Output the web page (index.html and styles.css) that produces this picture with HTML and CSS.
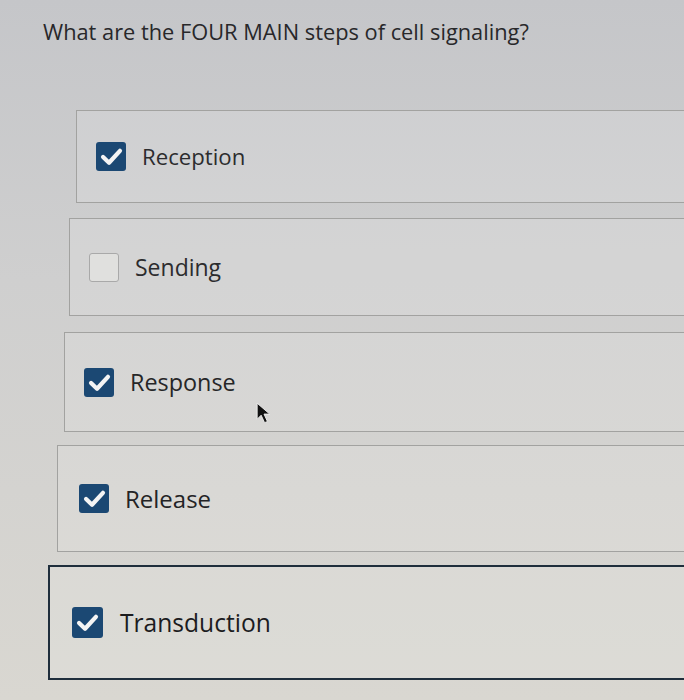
FILE: index.html
```html
<!DOCTYPE html>
<html lang="en">
  <head>
    <meta charset="UTF-8" />
    <meta name="viewport" content="width=device-width, initial-scale=1.0" />
    <title>Cell Signaling</title>
    <link rel="stylesheet" href="styles.css">
  </head>
  <body>
    <div class="question">
      <p class="question__text">What are the FOUR MAIN steps of cell signaling?</p>

      <div class="answers">
        <label class="answer">
          <span class="check check--on">
            <svg viewBox="0 0 24 24"><path d="M4.5 12.5L9.8 17.5L19.5 7" /></svg>
          </span>
          <span class="answer__label">Reception</span>
        </label>

        <label class="answer">
          <span class="check"></span>
          <span class="answer__label">Sending</span>
        </label>

        <label class="answer">
          <span class="check check--on">
            <svg viewBox="0 0 24 24"><path d="M4.5 12.5L9.8 17.5L19.5 7" /></svg>
          </span>
          <span class="answer__label">Response</span>
          <svg class="pointer" viewBox="0 0 14 20">
            <path d="M1 1L1 15L4.5 11.5L7.5 18L10 17L7 10.5L12 10.5Z" />
          </svg>
        </label>

        <label class="answer">
          <span class="check check--on">
            <svg viewBox="0 0 24 24"><path d="M4.5 12.5L9.8 17.5L19.5 7" /></svg>
          </span>
          <span class="answer__label">Release</span>
        </label>

        <label class="answer answer--focus">
          <span class="check check--on">
            <svg viewBox="0 0 24 24"><path d="M4.5 12.5L9.8 17.5L19.5 7" /></svg>
          </span>
          <span class="answer__label">Transduction</span>
        </label>
      </div>
    </div>
  </body>
</html>
```

FILE: styles.css
```css
html,
body {
  margin: 0;
  height: 100%;
}

body {
  overflow: hidden;
  font-family: "Open Sans", "Liberation Sans", sans-serif;
  color: #2e2e2f;
  background: linear-gradient(180deg, #c5c6c9 0%, #cfcfcf 40%, #d9d7d1 100%);
}

.question {
  padding: 18px 0 0 43px;
}

.question__text {
  margin: 0;
  font-size: 21.8px;
  line-height: 28px;
  color: #28282a;
}

.answers {
  display: flex;
  flex-direction: column;
  margin-top: 64px;
  margin-left: 33px;
}

.answer {
  position: relative;
  display: flex;
  align-items: center;
  gap: 16px;
  height: 91px;
  padding-left: 19px;
  border: 1.5px solid #a2a2a0;
  border-right: none;
  background: rgba(255, 255, 255, 0.12);
  cursor: pointer;
}

/* each row sits a little further left and grows a little */
.answer:nth-child(2) {
  margin-top: 15px;
  margin-left: -7px;
  height: 96px;
}

.answer:nth-child(3) {
  margin-top: 16px;
  margin-left: -12px;
  height: 98px;
}

.answer:nth-child(4) {
  margin-top: 13px;
  margin-left: -19px;
  height: 105px;
  padding-left: 21px;
}

.answer--focus {
  margin-top: 13px;
  margin-left: -28px;
  height: 111px;
  padding-left: 22px;
  border: 2.5px solid #1f2e3c;
  border-right: none;
  gap: 17px;
}

.answer__label {
  font-size: 22.2px;
  color: #2c2c2e;
}

.answer:nth-child(2) .answer__label {
  font-size: 23px;
}

.answer:nth-child(3) .answer__label {
  font-size: 23.4px;
  color: #262628;
}

.answer:nth-child(4) .answer__label {
  font-size: 24px;
  color: #232325;
}

.answer--focus .answer__label {
  font-size: 24.6px;
  color: #1c1c1e;
}

.check {
  display: flex;
  justify-content: center;
  align-items: center;
  width: 30px;
  height: 29px;
  flex-shrink: 0;
  box-sizing: border-box;
  border: 1.5px solid #a9a9a9;
  border-radius: 3px;
  background: #e0e0de;
}

.check--on {
  border: none;
  background: #1b4873;
}

.answer--focus .check {
  width: 31px;
  height: 31px;
}

.check svg {
  width: 27px;
  height: 27px;
}

.check svg path {
  fill: none;
  stroke: #f4f4f4;
  stroke-width: 3.8;
  stroke-linecap: round;
  stroke-linejoin: round;
}

.pointer {
  position: absolute;
  left: 191px;
  top: 69px;
  width: 16px;
  height: 23px;
}

.pointer path {
  fill: #111;
  stroke: #f0f0f0;
  stroke-width: 0.8;
}
```
